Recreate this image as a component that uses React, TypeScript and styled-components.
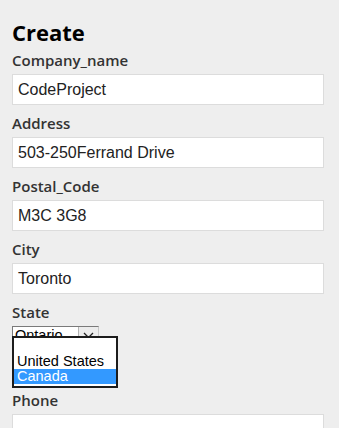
import { createGlobalStyle, styled } from 'styled-components';

const GlobalStyle = createGlobalStyle`
	html, body {
		margin: 0;
		padding: 0;
		background-color: #eeeeee;
	}
	body {
		font-family: 'Open Sans', 'Noto Sans', sans-serif;
		overflow: hidden;
	}
`;

const Page = styled.div`
	padding: 22px 15px 0 12px;
	height: 428px;
	box-sizing: border-box;
`;

const Heading = styled.h2`
	margin: 0;
	font-size: 22px;
	line-height: 20px;
	font-weight: 700;
	color: #000;
`;

const Label = styled.label`
	display: block;
	padding-top: 8px;
	margin-bottom: 4px;
	font-size: 15px;
	line-height: 20px;
	font-weight: 600;
	color: #333;
`;

const TextBox = styled.div`
	box-sizing: border-box;
	width: 312px;
	height: 31px;
	padding: 0 5px;
	display: flex;
	align-items: center;
	background-color: #fff;
	border: 1px solid #dcdcdc;
	font-family: 'Liberation Sans', Arial, sans-serif;
	font-size: 16px;
	color: #222;
`;

const SelectWrap = styled.div`
	position: relative;
	width: 87px;
	height: 19px;
	margin-bottom: 37px;
`;

const SelectBox = styled.div`
	box-sizing: border-box;
	display: flex;
	height: 100%;
	background-color: #fff;
	border: 1px solid #7a7a7a;
	border-bottom-color: #c8c8c8;
	border-right-color: #c8c8c8;
	font-family: 'Liberation Sans', Arial, sans-serif;
	font-size: 14.5px;
	color: #000;
`;

const SelectValue = styled.span`
	flex: 1;
	padding-left: 2px;
	line-height: 17px;
`;

const SelectButton = styled.span`
	width: 19px;
	display: flex;
	align-items: center;
	justify-content: center;
	background-color: #ececec;
	border-left: 1px solid #b4b4b4;
`;

const OptionList = styled.ul`
	position: absolute;
	top: 10px;
	left: 0;
	width: 106px;
	box-sizing: border-box;
	margin: 0;
	padding: 1px 0 2px 0;
	list-style: none;
	background-color: #fff;
	border: 2px solid #1c1c1c;
	font-family: 'Liberation Sans', Arial, sans-serif;
	font-size: 14.5px;
	z-index: 2;
`;

const Option = styled.li<{ $selected?: boolean }>`
	height: 15px;
	line-height: 15px;
	padding-left: 3px;
	white-space: nowrap;
	color: ${({ $selected }) => ($selected ? '#fff' : '#000')};
	background-color: ${({ $selected }) => ($selected ? '#3399ff' : 'transparent')};
`;

const fields = [
	{ label: 'Company_name', value: 'CodeProject' },
	{ label: 'Address', value: '503-250Ferrand Drive' },
	{ label: 'Postal_Code', value: 'M3C 3G8' },
	{ label: 'City', value: 'Toronto' },
];

const Chevron = () => (
	<svg width='11' height='7' viewBox='0 0 11 7'>
		<path d='M1 1 L5.5 5.5 L10 1' fill='none' stroke='#222' strokeWidth='1.3' />
	</svg>
);

export default function App(): JSX.Element {
	return (
		<>
			<GlobalStyle />
			<Page>
				<Heading>Create</Heading>
				{fields.map((f) => (
					<div key={f.label}>
						<Label>{f.label}</Label>
						<TextBox>{f.value}</TextBox>
					</div>
				))}
				<Label>State</Label>
				<SelectWrap>
					<SelectBox>
						<SelectValue>Ontario</SelectValue>
						<SelectButton>
							<Chevron />
						</SelectButton>
					</SelectBox>
					<OptionList>
						<Option>&nbsp;</Option>
						<Option>United States</Option>
						<Option $selected>Canada</Option>
					</OptionList>
				</SelectWrap>
				<Label>Phone</Label>
				<TextBox />
			</Page>
		</>
	);
}
